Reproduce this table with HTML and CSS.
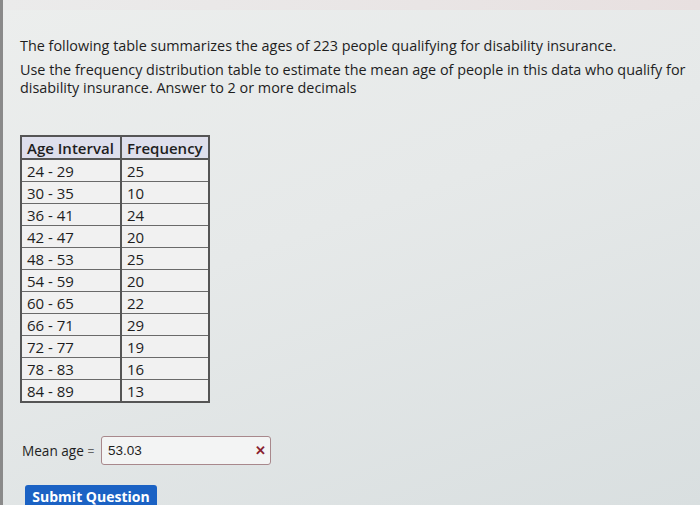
FILE: index.html
```html
<!DOCTYPE html>
<html>
<head>
<meta charset="utf-8">
<link rel="stylesheet" href="styles.css">
</head>
<body>
<div class="page">
  <div class="topstrip"></div>
  <div class="content">
    <p class="q1">The following table summarizes the ages of 223 people qualifying for disability insurance.</p>
    <p class="q2">Use the frequency distribution table to estimate the mean age of people in this data who qualify for disability insurance. Answer to 2 or more decimals</p>
    <table class="freq">
      <thead>
        <tr><th class="c1">Age Interval</th><th class="c2">Frequency</th></tr>
      </thead>
      <tbody>
        <tr><td>24 - 29</td><td>25</td></tr>
        <tr><td>30 - 35</td><td>10</td></tr>
        <tr><td>36 - 41</td><td>24</td></tr>
        <tr><td>42 - 47</td><td>20</td></tr>
        <tr><td>48 - 53</td><td>25</td></tr>
        <tr><td>54 - 59</td><td>20</td></tr>
        <tr><td>60 - 65</td><td>22</td></tr>
        <tr><td>66 - 71</td><td>29</td></tr>
        <tr><td>72 - 77</td><td>19</td></tr>
        <tr><td>78 - 83</td><td>16</td></tr>
        <tr><td>84 - 89</td><td>13</td></tr>
      </tbody>
    </table>
    <div class="answer">
      <span class="label">Mean age <span class="eq">=</span></span>
      <div class="inputbox">
        <span class="val">53.03</span>
        <span class="wrong">&#x2715;</span>
      </div>
    </div>
    <button class="submit">Submit Question</button>
  </div>
</div>
</body>
</html>
```
FILE: styles.css
```css
html, body {
  margin: 0;
  padding: 0;
}
body {
  width: 700px;
  height: 505px;
  overflow: hidden;
  font-family: "Open Sans", "DejaVu Sans", sans-serif;
  color: #1e1e1e;
}
.page {
  width: 700px;
  height: 505px;
  box-sizing: border-box;
  border-left: 3px solid #8a8a8a;
  background: linear-gradient(160deg, #eceeed 0%, #e6e9e9 45%, #d9dfe0 100%);
  position: relative;
}
.topstrip {
  height: 10px;
  background: linear-gradient(90deg, #ebebeb 0%, #e9e5e5 60%, #e8e0e0 100%);
}
.content {
  padding: 26px 0 0 17px;
}
.q1 {
  margin: 0;
  font-size: 14.4px;
  line-height: 20px;
}
.q2 {
  margin: 5px 0 0 0;
  font-size: 14.4px;
  line-height: 18px;
  width: 680px;
}
.freq {
  margin-top: 38px;
  border-collapse: collapse;
  font-size: 15px;
  background: #f1f1f1;
}
.freq th {
  background: #dedfec;
  font-weight: 600;
  text-align: left;
  height: 21px;
  padding: 0 5px;
  border: 2px solid #555;
  line-height: 18px;
}
.freq th.c1 { width: 88px; }
.freq th.c2 { width: 76px; }
.freq td {
  border: 1px solid #6a6a6a;
  height: 21px;
  padding: 0 5px;
  line-height: 18px;
}
.freq td:first-child { border-left: 2px solid #555; border-right: 2px solid #555; }
.freq td:last-child { border-right: 2px solid #555; }
.freq tr:last-child td { border-bottom: 2px solid #555; }
.answer {
  display: flex;
  align-items: center;
  margin-top: 33px;
  margin-left: 2px;
}
.label {
  font-size: 13.6px;
  width: 79px;
}
.eq {
  color: #666;
  font-size: 12px;
}
.inputbox {
  width: 170px;
  height: 29px;
  box-sizing: border-box;
  border: 1px solid #a8888c;
  border-radius: 3px;
  background: #f3f4f4;
  display: flex;
  align-items: center;
  justify-content: space-between;
  padding: 0 4px 0 6px;
  font-family: "Liberation Sans", Arial, sans-serif;
  font-size: 13.5px;
}
.wrong {
  color: #8a1f2f;
  font-weight: bold;
  font-size: 13px;
}
.submit {
  display: block;
  margin: 20px 0 0 5px;
  width: 132px;
  height: 22px;
  border: none;
  border-radius: 3px 3px 0 0;
  background: #1b62c4;
  color: #fff;
  font-family: "Open Sans", sans-serif;
  font-weight: 700;
  font-size: 14px;
  line-height: 16px;
  padding: 1px 0 0 0;
  text-align: center;
  vertical-align: top;
}
```
